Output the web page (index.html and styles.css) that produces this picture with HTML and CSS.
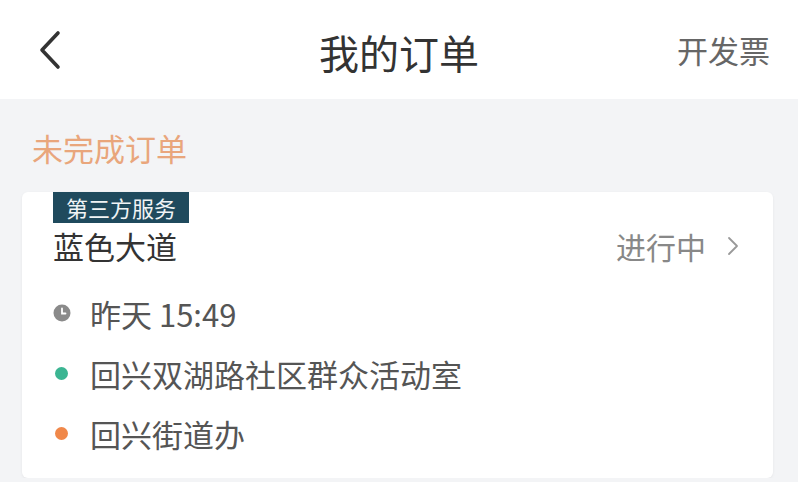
FILE: index.html
```html
<!DOCTYPE html>
<html lang="zh-CN">
<head>
    <meta charset="UTF-8">
    <meta name="viewport" content="width=device-width, initial-scale=1.0">
    <title>我的订单</title>
    <link rel="stylesheet" href="styles.css">
</head>
<body>
    <header class="top-bar">
        <a class="back" href="#">
            <svg width="26" height="40" viewBox="0 0 26 40">
                <path d="M21 3 L5 20 L21 37" fill="none" stroke="#333" stroke-width="3.6" stroke-linecap="round" stroke-linejoin="round"/>
            </svg>
        </a>
        <h1 class="title">我的订单</h1>
        <a class="invoice" href="#">开发票</a>
    </header>

    <main class="content">
        <h2 class="section-title">未完成订单</h2>

        <div class="order-card">
            <span class="tag">第三方服务</span>
            <div class="order-head">
                <span class="order-name">蓝色大道</span>
                <span class="order-status">进行中
                    <svg width="14" height="22" viewBox="0 0 14 22">
                        <path d="M3 3 L11 11 L3 19" fill="none" stroke="#999" stroke-width="1.8" stroke-linecap="round" stroke-linejoin="round"/>
                    </svg>
                </span>
            </div>
            <ul class="order-info">
                <li>
                    <svg class="clock" width="18" height="18" viewBox="0 0 18 18">
                        <circle cx="9" cy="9" r="8.5" fill="#8a8a8a"/>
                        <path d="M9 4.5 V9.5 H12.5" fill="none" stroke="#fff" stroke-width="1.8" stroke-linecap="round"/>
                    </svg>
                    <span>昨天 15:49</span>
                </li>
                <li>
                    <i class="dot dot-green"></i>
                    <span>回兴双湖路社区群众活动室</span>
                </li>
                <li>
                    <i class="dot dot-orange"></i>
                    <span>回兴街道办</span>
                </li>
            </ul>
        </div>
    </main>
</body>
</html>
```

FILE: styles.css
```css
* {
    box-sizing: border-box;
}

body {
    margin: 0;
    font-family: "Noto Sans CJK SC", "Noto Sans", sans-serif;
    background-color: #f3f4f6;
    color: #333;
}

.top-bar {
    height: 99px;
    background-color: #fff;
    display: flex;
    align-items: center;
    justify-content: space-between;
    padding: 0 28px 0 37px;
    position: relative;
}

.back {
    display: flex;
    align-items: center;
}

.title {
    position: absolute;
    left: 0;
    right: 0;
    margin: 0;
    text-align: center;
    font-size: 40px;
    font-weight: normal;
    color: #333;
    pointer-events: none;
    line-height: 1;
    top: 32px;
}

.invoice {
    font-size: 31px;
    color: #666;
    text-decoration: none;
    line-height: 1;
}

.content {
    padding: 0 25px 0 22px;
}

.section-title {
    margin: 0;
    padding: 30px 0 25px 10px;
    font-size: 31px;
    font-weight: normal;
    line-height: 38px;
    color: #e9a67c;
}

.order-card {
    background-color: #fff;
    border-radius: 6px;
    padding: 0 33px 15px 31px;
    box-shadow: 0 1px 3px rgba(0, 0, 0, 0.06);
}

.tag {
    display: inline-block;
    background-color: #1f4a5d;
    color: #f0f4f5;
    font-size: 22px;
    line-height: 31px;
    padding: 0 13px;
}

.order-head {
    display: flex;
    justify-content: space-between;
    align-items: center;
    line-height: 46px;
}

.order-name {
    font-size: 31px;
    color: #333;
}

.order-status {
    font-size: 30px;
    color: #888;
    display: flex;
    align-items: center;
    gap: 20px;
}

.order-info {
    list-style: none;
    margin: 0;
    padding: 14px 0 0;
}

.order-info li {
    display: flex;
    align-items: center;
    height: 60px;
    font-size: 31px;
    color: #555;
}

.order-info li .clock {
    flex-shrink: 0;
    margin-right: 19px;
}

.dot {
    display: inline-block;
    flex-shrink: 0;
    width: 13px;
    height: 13px;
    border-radius: 50%;
    margin-left: 2px;
    margin-right: 22px;
}

.dot-green {
    background-color: #3bb592;
}

.dot-orange {
    background-color: #f0884a;
}
```
